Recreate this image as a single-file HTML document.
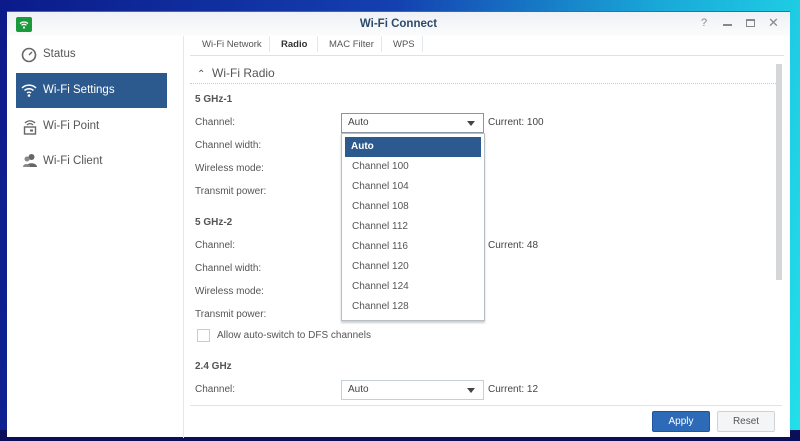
<!DOCTYPE html>
<html><head><style>
*{margin:0;padding:0;box-sizing:border-box}
body{width:800px;height:441px;overflow:hidden;font-family:"Liberation Sans",sans-serif;font-size:10px;color:#444;position:relative;background:linear-gradient(100deg,#0c1a8a 0%,#1440b0 45%,#19a8d8 75%,#22e0ea 100%)}
.bot{position:absolute;left:0;right:0;top:430px;height:11px;background:#0b0f5a}
.win{position:absolute;left:7px;top:11px;width:783px;height:426px;background:#fff;border-top:1px solid #3a6aa0}
.title{position:absolute;left:0;top:0;width:100%;height:24px;background:linear-gradient(#eef1f5,#fbfcfd)}
.title .t{position:absolute;left:0;width:100%;text-align:center;top:6px;font-weight:bold;font-size:11.5px;color:#2d4a6a}
.a{position:absolute;white-space:nowrap}
.side .it{position:absolute;left:9px;width:151px;height:35px;font-size:11.5px;color:#555;padding-left:27px;line-height:35px}
.sel{position:absolute;height:20px;border:1px solid #c8ced6;background:#fff;padding-left:6px;line-height:18px;font-size:10px}
.sel:after{content:"";position:absolute;right:8px;top:7px;border:4px solid transparent;border-top:5px solid #444}
.lbl{position:absolute;left:195px;font-size:10px;color:#555}
.h{position:absolute;left:195px;font-weight:bold;font-size:10px;color:#555}
</style></head><body>
<div class="bot"></div>
<div class="win">
<div class="title"><div class="t">Wi-Fi Connect</div>
<div class="a" style="left:9px;top:5px;width:16px;height:15px;background:#1a9a3a;border-radius:2px"><svg width="16" height="15" viewBox="0 0 16 15"><path d="M4 6.5a6 6 0 0 1 8 0M5.5 8.3a3.6 3.6 0 0 1 5 0" stroke="#fff" stroke-width="1.3" fill="none"/><circle cx="8" cy="10.5" r="1.1" fill="#fff"/></svg></div>
<div class="a" style="left:694px;top:5px;color:#888;font-size:11px">?</div>
<div class="a" style="left:716px;top:12px;width:9px;height:1.5px;background:#888"></div>
<div class="a" style="left:739px;top:7px;width:9px;height:8px;border:1.5px solid #888;border-top-width:2.5px"></div>
<div class="a" style="left:761px;top:3px;color:#888;font-size:13px">✕</div>
</div>
<div class="side">
<div class="it" style="top:25px">Status</div>
<svg class="a" style="left:14px;top:35px" width="16" height="16"><circle cx="8" cy="8" r="6.5" stroke="#666" stroke-width="1.6" fill="none"/><path d="M8 8l3-3" stroke="#666" stroke-width="1.4"/></svg>
<div class="it" style="top:61px;background:#2d5a8e;color:#fff;height:35px">Wi-Fi Settings</div>
<svg class="a" style="left:13px;top:70px" width="18" height="16"><path d="M2 6a10 10 0 0 1 14 0M4.5 8.5a6.5 6.5 0 0 1 9 0M7 11a3 3 0 0 1 4 0" stroke="#fff" stroke-width="1.5" fill="none"/><circle cx="9" cy="13.5" r="1.3" fill="#fff"/></svg>
<div class="it" style="top:97px">Wi-Fi Point</div>
<svg class="a" style="left:16px;top:106px" width="14" height="18"><path d="M2 5a7 7 0 0 1 10 0M4 7a4 4 0 0 1 6 0" stroke="#666" stroke-width="1.3" fill="none"/><rect x="1.5" y="9" width="11" height="7" stroke="#666" stroke-width="1.4" fill="none"/><rect x="7" y="11.5" width="3" height="2" fill="#666"/></svg>
<div class="it" style="top:132px">Wi-Fi Client</div>
<svg class="a" style="left:15px;top:141px" width="16" height="15"><circle cx="9.5" cy="4" r="3" fill="#666"/><path d="M4 14c0-5 11-5 11 0z" fill="#666"/><circle cx="5" cy="6" r="2.5" fill="#888"/><path d="M1 14c0-4 7-4 7 0z" fill="#888"/></svg>
</div>
<div class="a" style="left:176px;top:24px;width:1px;height:402px;background:#e4e8ec"></div>
</div>
<div class="a" style="left:190px;top:34px;width:594px;height:22px;border-bottom:1px solid #dde2e8"></div>
<div class="a" style="left:202px;top:39px;font-size:9.5px;color:#555">Wi-Fi Network</div>
<div class="a" style="left:269px;top:36px;width:1px;height:16px;background:#e4e8ec"></div>
<div class="a" style="left:281px;top:39px;font-size:9.5px;font-weight:bold;color:#333">Radio</div>
<div class="a" style="left:317px;top:36px;width:1px;height:16px;background:#e4e8ec"></div>
<div class="a" style="left:329px;top:39px;font-size:9.5px;color:#555">MAC Filter</div>
<div class="a" style="left:381px;top:36px;width:1px;height:16px;background:#e4e8ec"></div>
<div class="a" style="left:393px;top:39px;font-size:9.5px;color:#555">WPS</div>
<div class="a" style="left:422px;top:36px;width:1px;height:16px;background:#e4e8ec"></div>
<div class="a" style="left:197px;top:66px;font-size:12px;color:#555"><span style="font-size:10px">⌃</span>&nbsp; Wi-Fi Radio</div>
<div class="a" style="left:190px;top:83px;width:592px;border-top:1px dotted #ccc"></div>
<div class="a" style="left:776px;top:64px;width:6px;height:216px;background:#d4d6d8"></div>
<div class="h" style="top:94px">5 GHz-1</div>
<div class="lbl" style="top:117px">Channel:</div>
<div class="lbl" style="top:140px">Channel width:</div>
<div class="lbl" style="top:163px">Wireless mode:</div>
<div class="lbl" style="top:186px">Transmit power:</div>
<div class="h" style="top:217px">5 GHz-2</div>
<div class="lbl" style="top:240px">Channel:</div>
<div class="lbl" style="top:263px">Channel width:</div>
<div class="lbl" style="top:286px">Wireless mode:</div>
<div class="lbl" style="top:309px">Transmit power:</div>
<div class="a" style="left:197px;top:329px;width:13px;height:13px;border:1px solid #ccc"></div>
<div class="a" style="left:217px;top:330px;font-size:10px;color:#555">Allow auto-switch to DFS channels</div>
<div class="h" style="top:361px">2.4 GHz</div>
<div class="lbl" style="top:384px">Channel:</div>
<div class="sel" style="left:341px;top:113px;width:143px;border-color:#8a96a4">Auto</div>
<div class="a" style="left:488px;top:117px;font-size:10px">Current: 100</div>
<div class="a" style="left:488px;top:240px;font-size:10px">Current: 48</div>
<div class="sel" style="left:341px;top:380px;width:143px">Auto</div>
<div class="a" style="left:488px;top:384px;font-size:10px">Current: 12</div>
<div class="a" style="left:190px;top:405px;width:592px;border-top:1px solid #e0e4e8"></div>
<div class="a" style="left:341px;top:133px;width:144px;height:188px;background:#fff;border:1px solid #b8bec6;box-shadow:0 2px 2px rgba(0,0,0,.2)">
<div style="margin:3px 3px 0;height:20px;background:#2d5a8e;color:#fff;font-weight:bold;padding-left:6px;line-height:20px">Auto</div>
<div style="padding-left:10px;line-height:20px;color:#555">Channel 100<br>Channel 104<br>Channel 108<br>Channel 112<br>Channel 116<br>Channel 120<br>Channel 124<br>Channel 128</div>
</div>
<div class="a" style="left:652px;top:411px;width:58px;height:21px;background:#2d6ab8;border:1px solid #1f55a0;color:#fff;text-align:center;line-height:19px;border-radius:2px">Apply</div>
<div class="a" style="left:717px;top:411px;width:58px;height:21px;background:#f4f5f6;border:1px solid #cfd3d8;color:#555;text-align:center;line-height:19px;border-radius:2px">Reset</div>
</body></html>
